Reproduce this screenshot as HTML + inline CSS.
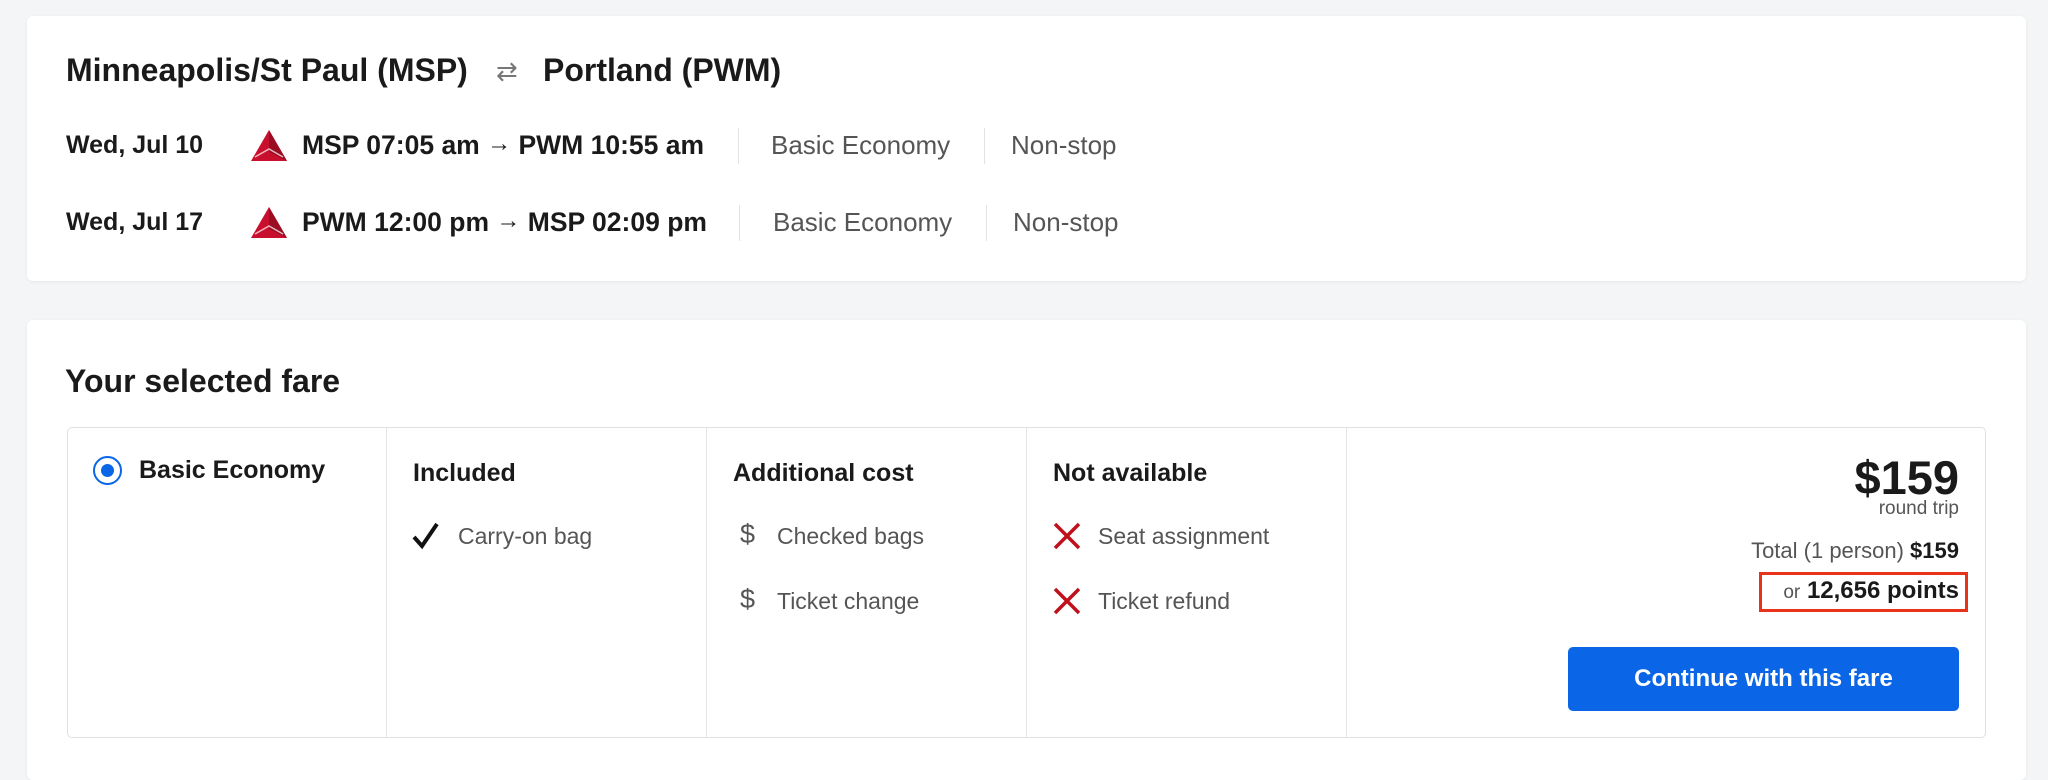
<!DOCTYPE html>
<html><head><style>
*{margin:0;padding:0;box-sizing:border-box}
body{width:2048px;height:760px;background:#f3f5f6;font-family:"Liberation Sans",sans-serif;color:#1a1a1a;position:relative;overflow:hidden}
.card{position:absolute;background:#fff;border-radius:6px;box-shadow:0 1px 3px rgba(0,0,0,.06)}
.a{position:absolute;white-space:nowrap}
.b{font-weight:bold}
.g{color:#555}
.sep{position:absolute;width:1px;background:#e3e3e3}
.vl{position:absolute;top:0;bottom:0;width:1px;background:#e6e6e6}
.ar{display:inline-block;position:relative;top:-3px;font-size:24px}
</style></head><body>
<div class="card" style="left:27px;top:16px;width:1999px;height:265px"></div>
<div class="a b" style="left:66px;top:52px;font-size:32px">Minneapolis/St Paul (MSP)</div>
<div class="a g" style="left:496px;top:56px;font-size:26px;color:#777">⇄</div>
<div class="a b" style="left:543px;top:52px;font-size:32px">Portland (PWM)</div>

<div class="a b" style="left:66px;top:131px;font-size:25px">Wed, Jul 10</div>
<svg class="a" style="left:251px;top:130px" width="36" height="31" viewBox="0 0 36 31"><path d="M18 0 L36 31 L0 31Z" fill="#c8102e"/><path d="M18 0 L36 31 L18 22Z" fill="#9b0d22"/><path d="M4 27 L18 19 L32 27" stroke="#fff" stroke-width="1.5" fill="none" opacity=".7"/></svg>
<div class="a b" style="left:302px;top:130px;font-size:26.5px">MSP 07:05 am <span class="ar">→</span> PWM 10:55 am</div>
<div class="sep" style="left:738px;top:128px;height:36px"></div>
<div class="a g" style="left:771px;top:130px;font-size:26px">Basic Economy</div>
<div class="sep" style="left:984px;top:128px;height:36px"></div>
<div class="a g" style="left:1011px;top:130px;font-size:26px">Non-stop</div>

<div class="a b" style="left:66px;top:208px;font-size:25px">Wed, Jul 17</div>
<svg class="a" style="left:251px;top:207px" width="36" height="31" viewBox="0 0 36 31"><path d="M18 0 L36 31 L0 31Z" fill="#c8102e"/><path d="M18 0 L36 31 L18 22Z" fill="#9b0d22"/><path d="M4 27 L18 19 L32 27" stroke="#fff" stroke-width="1.5" fill="none" opacity=".7"/></svg>
<div class="a b" style="left:302px;top:207px;font-size:26.5px">PWM 12:00 pm <span class="ar">→</span> MSP 02:09 pm</div>
<div class="sep" style="left:739px;top:205px;height:36px"></div>
<div class="a g" style="left:773px;top:207px;font-size:26px">Basic Economy</div>
<div class="sep" style="left:986px;top:205px;height:36px"></div>
<div class="a g" style="left:1013px;top:207px;font-size:26px">Non-stop</div>

<div class="card" style="left:27px;top:320px;width:1999px;height:460px"></div>
<div class="a b" style="left:65px;top:363px;font-size:32px">Your selected fare</div>
<div style="position:absolute;left:67px;top:427px;width:1919px;height:311px;border:1px solid #e0e0e0;border-radius:5px">
<div class="vl" style="left:318px"></div><div class="vl" style="left:638px"></div><div class="vl" style="left:958px"></div><div class="vl" style="left:1278px"></div>
</div>
<div class="a" style="left:93px;top:456px;width:29px;height:29px;border:2px solid #0a66e6;border-radius:50%"></div>
<div class="a" style="left:101px;top:464px;width:13px;height:13px;background:#0a66e6;border-radius:50%"></div>
<div class="a b" style="left:139px;top:456px;font-size:25px">Basic Economy</div>

<div class="a b" style="left:413px;top:459px;font-size:25px">Included</div>
<svg class="a" style="left:412px;top:522px" width="28" height="28" viewBox="0 0 28 28"><path d="M2 15 L10 24 L25 2" stroke="#111" stroke-width="4" fill="none"/></svg>
<div class="a g" style="left:458px;top:523px;font-size:23px">Carry-on bag</div>

<div class="a b" style="left:733px;top:459px;font-size:25px">Additional cost</div>
<div class="a g" style="left:740px;top:519px;font-size:27px">$</div>
<div class="a g" style="left:777px;top:523px;font-size:23px">Checked bags</div>
<div class="a g" style="left:740px;top:584px;font-size:27px">$</div>
<div class="a g" style="left:777px;top:588px;font-size:23px">Ticket change</div>

<div class="a b" style="left:1053px;top:459px;font-size:25px">Not available</div>
<svg class="a" style="left:1053px;top:522px" width="28" height="28" viewBox="0 0 28 28"><path d="M2 2 L26 26 M26 2 L2 26" stroke="#c0101c" stroke-width="3.5"/></svg>
<div class="a g" style="left:1098px;top:523px;font-size:23px">Seat assignment</div>
<svg class="a" style="left:1053px;top:587px" width="28" height="28" viewBox="0 0 28 28"><path d="M2 2 L26 26 M26 2 L2 26" stroke="#c0101c" stroke-width="3.5"/></svg>
<div class="a g" style="left:1098px;top:588px;font-size:23px">Ticket refund</div>

<div class="a b" style="right:89px;top:450px;font-size:47px">$159</div>
<div class="a g" style="right:89px;top:498px;font-size:19px">round trip</div>
<div class="a" style="right:89px;top:538px;font-size:22px"><span class="g">Total (1 person)</span> <b>$159</b></div>
<div class="a" style="left:1759px;top:572px;width:209px;height:40px;border:3px solid #e8321a"></div>
<div class="a" style="right:89px;top:577px;font-size:24px"><span class="g" style="font-size:19px">or</span> <b>12,656 points</b></div>
<div class="a b" style="left:1568px;top:647px;width:391px;height:64px;background:#0a66e6;border-radius:5px;color:#fff;font-size:24px;text-align:center;line-height:64px">Continue with this fare</div>
</body></html>
